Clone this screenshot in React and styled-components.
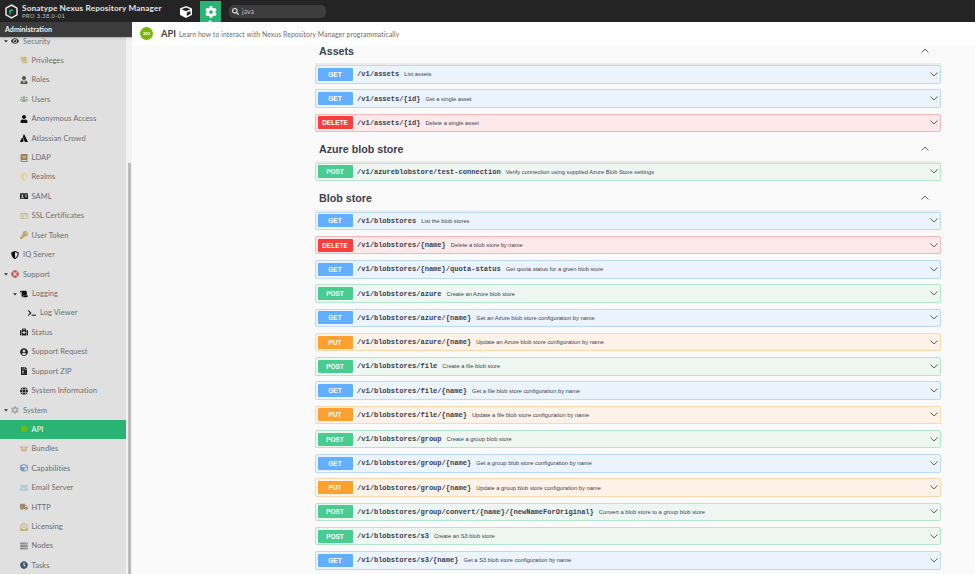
import React from 'react'
import styled, { createGlobalStyle } from 'styled-components'
import {
  FaEye, FaScroll, FaUserTie, FaUsers, FaUser, FaAtlassian, FaBook, FaShieldAlt, FaIdCard,
  FaRegIdCard, FaKey, FaLifeRing, FaTerminal, FaMedkit, FaUserCircle, FaFileArchive, FaGlobe,
  FaCog, FaBoxOpen, FaCube, FaEnvelope, FaTruck, FaEnvelopeOpenText, FaServer, FaClock,
  FaCaretDown, FaSearch
} from 'react-icons/fa'

const GlobalStyle = createGlobalStyle`
  html, body {
    margin: 0;
    padding: 0;
    height: 574px;
    overflow: hidden;
    background: #fafafa;
  }
`

const Page = styled.div`
  width: 975px;
  height: 574px;
  display: flex;
  flex-direction: column;
  overflow: hidden;
  font-family: Lato, "Liberation Sans", sans-serif;
`

const TopBar = styled.div`
  flex: none;
  height: 22px;
  background: #242424;
  display: flex;
  align-items: center;
  color: #fff;
`

const Brand = styled.div`
  width: 175.5px;
  flex: none;
  display: flex;
  align-items: center;
  padding-left: 4.5px;
  box-sizing: border-box;
  gap: 4.5px;
`

const BrandText = styled.div`
  display: flex;
  flex-direction: column;
  white-space: nowrap;
`

const BrandName = styled.span`
  font-size: 8.2px;
  line-height: 10px;
  font-weight: 700;
  color: #e4e4e4;
  letter-spacing: 0.15px;
`

const BrandVersion = styled.span`
  font-size: 5.8px;
  line-height: 6px;
  color: #bdbdbd;
  letter-spacing: 0.38px;
`

const NavButton = styled.div`
  position: relative;
  width: 21px;
  height: 21px;
  margin-top: 1px;
  margin-left: ${p => (p.$active ? 3.5 : 0)}px;
  display: flex;
  align-items: center;
  justify-content: center;
  font-size: 12px;
  background: ${p => (p.$active ? '#29b473' : 'transparent')};

  ${p => p.$active && `
    &::after {
      content: '';
      position: absolute;
      bottom: 0;
      left: 8px;
      border-left: 2.5px solid transparent;
      border-right: 2.5px solid transparent;
      border-bottom: 2.5px solid #fff;
    }
  `}
`

const SearchBox = styled.div`
  width: 97px;
  height: 13px;
  margin-left: 8px;
  padding-left: 3px;
  box-sizing: border-box;
  border-radius: 5px;
  background: #3d3d3d;
  display: flex;
  align-items: center;
  gap: 3px;
  font-size: 7px;
  color: #bbb;

  svg {
    color: #e8e8e8;
    font-size: 7px;
  }
`

const Body = styled.div`
  flex: 1;
  min-height: 0;
  display: flex;
`

const Sidebar = styled.div`
  width: 132px;
  flex: none;
  display: flex;
  flex-direction: column;
`

const AdminHeader = styled.div`
  position: relative;
  z-index: 1;
  height: 15px;
  flex: none;
  padding-left: 5px;
  background: #3c3c3c;
  box-shadow: 0 1px 2px rgba(0, 0, 0, 0.25);
  color: #f0f0f0;
  font-size: 7.1px;
  font-weight: 700;
  line-height: 15px;
`

const SidebarBody = styled.div`
  flex: 1;
  min-height: 0;
  display: flex;
  overflow: hidden;
`

const Tree = styled.div`
  width: 126px;
  flex: none;
  background: #e0e0e0;
`

const TreeList = styled.div`
  margin-top: -5.7px;
`

const TreeRow = styled.div`
  height: 19.43px;
  box-sizing: border-box;
  padding-left: ${p => p.$indent}px;
  display: flex;
  align-items: center;
  font-size: 7.5px;
  letter-spacing: 0.08px;
  white-space: nowrap;
  color: ${p => (p.$selected ? '#fff' : '#6d6d6d')};
  background: ${p => (p.$selected ? '#29b473' : 'transparent')};
`

const Caret = styled(FaCaretDown)`
  width: 6px;
  font-size: 6px;
  margin-right: 2px;
  color: #333;
  flex: none;
`

const IconSlot = styled.span`
  width: 8px;
  margin-right: 4px;
  flex: none;
  display: flex;
  justify-content: center;
  font-size: 8px;
  color: ${p => p.$color};
`

const GreenDot = styled.span`
  width: 6px;
  height: 6px;
  border-radius: 50%;
  background: #7ab800;
`

const Gutter = styled.div`
  flex: 1;
  background: #f1f1f1;
  padding-left: 2px;
`

const Thumb = styled.div`
  width: 3px;
  height: 420px;
  margin-top: 126px;
  background: #bdbdbd;
`

const Main = styled.div`
  flex: 1;
  min-width: 0;
  display: flex;
  flex-direction: column;
  background: #fafafa;
`

const ApiHeader = styled.div`
  position: relative;
  z-index: 1;
  flex: none;
  height: 23px;
  background: #fff;
  display: flex;
  align-items: center;
  padding-left: 8px;
`

const ApiBadge = styled.div`
  width: 13px;
  height: 13px;
  border-radius: 50%;
  background: #7ab800;
  color: #fff;
  font-size: 4px;
  font-weight: 700;
  text-align: center;
  line-height: 13px;
  margin-right: 8px;
`

const ApiTitle = styled.span`
  font-size: 9.4px;
  font-weight: 700;
  color: #444;
  margin-right: 3px;
`

const ApiNote = styled.span`
  font-size: 6.8px;
  color: #6d6d6d;
  letter-spacing: 0.1px;
`

const Docs = styled.div`
  width: 626px;
  margin-left: 183px;
  font-family: "Liberation Sans", Arial, sans-serif;
`

const Section = styled.section`
  margin-top: ${p => (p.$first ? 0 : 10.5)}px;
`

const SectionHead = styled.div`
  height: 18px;
  box-sizing: content-box;
  border-bottom: 2px solid #ececec;
  display: flex;
  justify-content: space-between;
  padding-left: 4px;
  color: #3b4151;
  font-size: 10.7px;
  font-weight: 700;
  line-height: 12px;

  svg {
    margin: 3px 12px 0 0;
  }
`

const palette = {
  GET: { bg: '#ebf3fc', line: '#bcd9f7', badge: '#61affe' },
  POST: { bg: '#edf6f1', line: '#b3e6cf', badge: '#49cc90' },
  PUT: { bg: '#fdf2e8', line: '#fcd8ae', badge: '#fca130' },
  DELETE: { bg: '#fde9e9', line: '#f8b6b6', badge: '#f93e3e' }
}

const OpRow = styled.div`
  height: 18.5px;
  margin-bottom: 5.75px;
  box-sizing: border-box;
  border: 1px solid ${p => palette[p.$method].line};
  border-radius: 2px;
  background: ${p => palette[p.$method].bg};
  display: flex;
  align-items: center;
  padding-left: 1.5px;
  white-space: nowrap;
`

const Method = styled.span`
  width: 35px;
  height: 13px;
  flex: none;
  border-radius: 1px;
  background: ${p => palette[p.$method].badge};
  color: #fff;
  font-size: 6.5px;
  font-weight: 700;
  line-height: 13px;
  text-align: center;
`

const OpPath = styled.span`
  margin-left: 4.5px;
  font-family: "Liberation Mono", monospace;
  font-size: 7.05px;
  font-weight: 700;
  color: #3b4151;
`

const OpSummary = styled.span`
  margin-left: 5px;
  flex: 1;
  font-size: 5.75px;
  color: #3b4151;
`

const Chevron = ({ up, className }) => (
  <svg className={className} width='8' height='5' viewBox='0 0 8 5' fill='none' stroke='#666' strokeWidth='1'>
    <path d={up ? 'M0.5 4.5L4 1L7.5 4.5' : 'M0.5 0.5L4 4L7.5 0.5'} />
  </svg>
)

const RowChevron = styled(Chevron)`
  margin-right: 2px;
  flex: none;
`

const Logo = () => (
  <svg width='13' height='15' viewBox='0 0 13 15'>
    <path d='M6.5 1L12 4.2V10.8L6.5 14L1 10.8V4.2Z' fill='none' stroke='#e8e8e8' strokeWidth='1.5' />
    <path d='M5 10.5V6.2H8' fill='none' stroke='#1fb87a' strokeWidth='1.4' />
  </svg>
)

const tree = [
  { label: 'Security', icon: FaEye, color: '#333', indent: 3, open: true },
  { label: 'Privileges', icon: FaScroll, color: '#c9bb86', indent: 19.5 },
  { label: 'Roles', icon: FaUserTie, color: '#55503f', indent: 19.5 },
  { label: 'Users', icon: FaUsers, color: '#8a9a87', indent: 19.5 },
  { label: 'Anonymous Access', icon: FaUser, color: '#111', indent: 19.5 },
  { label: 'Atlassian Crowd', icon: FaAtlassian, color: '#111', indent: 19.5 },
  { label: 'LDAP', icon: FaBook, color: '#9c8257', indent: 19.5 },
  { label: 'Realms', icon: FaShieldAlt, color: '#e6d493', indent: 19.5 },
  { label: 'SAML', icon: FaIdCard, color: '#1c1c1c', indent: 19.5 },
  { label: 'SSL Certificates', icon: FaRegIdCard, color: '#c7bb95', indent: 19.5 },
  { label: 'User Token', icon: FaKey, color: '#c3a468', indent: 19.5 },
  { label: 'IQ Server', icon: FaShieldAlt, color: '#111', indent: 11 },
  { label: 'Support', icon: FaLifeRing, color: '#c8524a', indent: 3, open: true },
  { label: 'Logging', icon: FaScroll, color: '#111', indent: 12, open: true },
  { label: 'Log Viewer', icon: FaTerminal, color: '#111', indent: 28 },
  { label: 'Status', icon: FaMedkit, color: '#222', indent: 19.5 },
  { label: 'Support Request', icon: FaUserCircle, color: '#222', indent: 19.5 },
  { label: 'Support ZIP', icon: FaFileArchive, color: '#222', indent: 19.5 },
  { label: 'System Information', icon: FaGlobe, color: '#222', indent: 19.5 },
  { label: 'System', icon: FaCog, color: '#a8a8a8', indent: 3, open: true },
  { label: 'API', dot: true, indent: 19.5, selected: true },
  { label: 'Bundles', icon: FaBoxOpen, color: '#d3b886', indent: 19.5 },
  { label: 'Capabilities', icon: FaCube, color: '#7d9dbb', indent: 19.5 },
  { label: 'Email Server', icon: FaEnvelope, color: '#b5cbe0', indent: 19.5 },
  { label: 'HTTP', icon: FaTruck, color: '#9c8b6c', indent: 19.5 },
  { label: 'Licensing', icon: FaEnvelopeOpenText, color: '#c9ae7c', indent: 19.5 },
  { label: 'Nodes', icon: FaServer, color: '#8e8e8e', indent: 19.5 },
  { label: 'Tasks', icon: FaClock, color: '#44586b', indent: 19.5 }
]

const sections = [
  {
    title: 'Assets',
    ops: [
      ['GET', '/v1/assets', 'List assets'],
      ['GET', '/v1/assets/{id}', 'Get a single asset'],
      ['DELETE', '/v1/assets/{id}', 'Delete a single asset']
    ]
  },
  {
    title: 'Azure blob store',
    ops: [
      ['POST', '/v1/azureblobstore/test-connection', 'Verify connection using supplied Azure Blob Store settings']
    ]
  },
  {
    title: 'Blob store',
    ops: [
      ['GET', '/v1/blobstores', 'List the blob stores'],
      ['DELETE', '/v1/blobstores/{name}', 'Delete a blob store by name'],
      ['GET', '/v1/blobstores/{name}/quota-status', 'Get quota status for a given blob store'],
      ['POST', '/v1/blobstores/azure', 'Create an Azure blob store'],
      ['GET', '/v1/blobstores/azure/{name}', 'Get an Azure blob store configuration by name'],
      ['PUT', '/v1/blobstores/azure/{name}', 'Update an Azure blob store configuration by name'],
      ['POST', '/v1/blobstores/file', 'Create a file blob store'],
      ['GET', '/v1/blobstores/file/{name}', 'Get a file blob store configuration by name'],
      ['PUT', '/v1/blobstores/file/{name}', 'Update a file blob store configuration by name'],
      ['POST', '/v1/blobstores/group', 'Create a group blob store'],
      ['GET', '/v1/blobstores/group/{name}', 'Get a group blob store configuration by name'],
      ['PUT', '/v1/blobstores/group/{name}', 'Update a group blob store configuration by name'],
      ['POST', '/v1/blobstores/group/convert/{name}/{newNameForOriginal}', 'Convert a blob store to a group blob store'],
      ['POST', '/v1/blobstores/s3', 'Create an S3 blob store'],
      ['GET', '/v1/blobstores/s3/{name}', 'Get a S3 blob store configuration by name']
    ]
  }
]

export default function App () {
  return (
    <Page>
      <GlobalStyle />
      <TopBar>
        <Brand>
          <Logo />
          <BrandText>
            <BrandName>Sonatype Nexus Repository Manager</BrandName>
            <BrandVersion>PRO 3.38.0-01</BrandVersion>
          </BrandText>
        </Brand>
        <NavButton><FaCube /></NavButton>
        <NavButton $active><FaCog /></NavButton>
        <SearchBox><FaSearch />java</SearchBox>
      </TopBar>
      <Body>
        <Sidebar>
          <AdminHeader>Administration</AdminHeader>
          <SidebarBody>
            <Tree>
              <TreeList>
                {tree.map(item => {
                  const Icon = item.icon
                  return (
                    <TreeRow key={item.label} $indent={item.indent} $selected={item.selected}>
                      {item.open && <Caret />}
                      <IconSlot $color={item.color}>
                        {item.dot ? <GreenDot /> : <Icon />}
                      </IconSlot>
                      {item.label}
                    </TreeRow>
                  )
                })}
              </TreeList>
            </Tree>
            <Gutter><Thumb /></Gutter>
          </SidebarBody>
        </Sidebar>
        <Main>
          <ApiHeader>
            <ApiBadge>202</ApiBadge>
            <ApiTitle>API</ApiTitle>
            <ApiNote>Learn how to interact with Nexus Repository Manager programmatically</ApiNote>
          </ApiHeader>
          <Docs>
            {sections.map((s, i) => (
              <Section key={s.title} $first={i === 0}>
                <SectionHead>
                  {s.title}
                  <Chevron up />
                </SectionHead>
                {s.ops.map(([method, path, summary]) => (
                  <OpRow key={method + path} $method={method}>
                    <Method $method={method}>{method}</Method>
                    <OpPath>{path}</OpPath>
                    <OpSummary>{summary}</OpSummary>
                    <RowChevron />
                  </OpRow>
                ))}
              </Section>
            ))}
          </Docs>
        </Main>
      </Body>
    </Page>
  )
}
